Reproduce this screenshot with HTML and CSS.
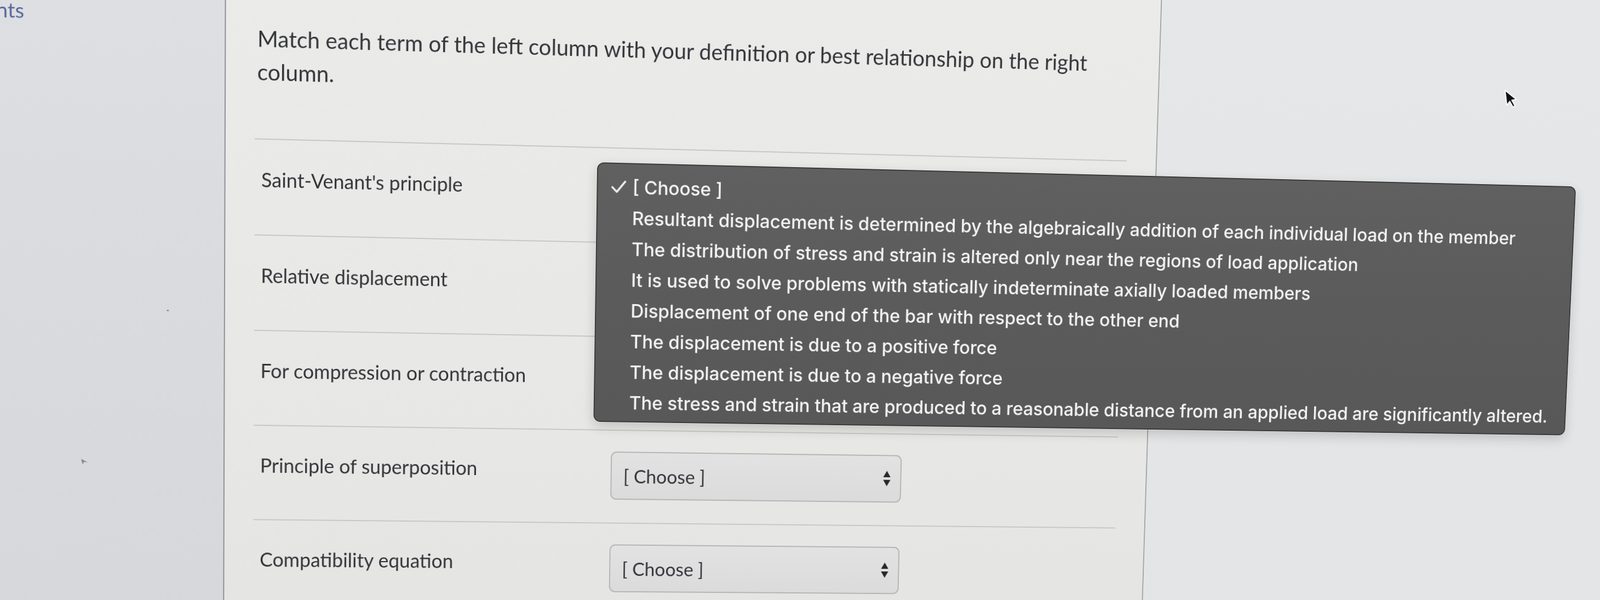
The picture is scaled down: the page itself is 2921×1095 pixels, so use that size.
FILE: index.html
```html
<!DOCTYPE html>
<html lang="en">
<head>
<meta charset="utf-8">
<title>Matching question</title>
<link rel="stylesheet" href="styles.css">
</head>
<body>
<div class="screen">
  <aside class="sidebar">
    <span class="crumb">nts</span>
    <span class="speck-dot"></span>
    <svg class="speck-mark" viewBox="0 0 12 10" width="12" height="10"><path d="M0 0 L12 6 L5 5 L3 10 Z" fill="#80828a"/></svg>
  </aside>
  <main class="panel">
    <p class="question">Match each term of the left column with your definition or best relationship on the right column.</p>
    <div class="answers">
      <div class="row">
        <div class="term">Saint-Venant's principle</div>
        <div class="select is-under"><span>[ Choose ]</span><svg class="arrows" viewBox="0 0 14 30" width="14" height="30"><path d="M7 0 L14 12 L0 12 Z M0 17 L14 17 L7 29 Z" fill="#26272b"/></svg></div>
      </div>
      <div class="row">
        <div class="term">Relative displacement</div>
        <div class="select is-under"><span>[ Choose ]</span><svg class="arrows" viewBox="0 0 14 30" width="14" height="30"><path d="M7 0 L14 12 L0 12 Z M0 17 L14 17 L7 29 Z" fill="#26272b"/></svg></div>
      </div>
      <div class="row">
        <div class="term">For compression or contraction</div>
        <div class="select is-under"><span>[ Choose ]</span><svg class="arrows" viewBox="0 0 14 30" width="14" height="30"><path d="M7 0 L14 12 L0 12 Z M0 17 L14 17 L7 29 Z" fill="#26272b"/></svg></div>
      </div>
      <div class="row">
        <div class="term">Principle of superposition</div>
        <div class="select"><span>[ Choose ]</span><svg class="arrows" viewBox="0 0 14 30" width="14" height="30"><path d="M7 0 L14 12 L0 12 Z M0 17 L14 17 L7 29 Z" fill="#26272b"/></svg></div>
      </div>
      <div class="row">
        <div class="term">Compatibility equation</div>
        <div class="select"><span>[ Choose ]</span><svg class="arrows" viewBox="0 0 14 30" width="14" height="30"><path d="M7 0 L14 12 L0 12 Z M0 17 L14 17 L7 29 Z" fill="#26272b"/></svg></div>
      </div>
    </div>
  </main>
  <div class="backdrop"></div>

  <div class="menu">
    <div class="item"><span class="slot"><svg class="check" viewBox="0 0 28 24" width="28" height="24"><path d="M2 13 L10.5 21.5 L26 2.5" fill="none" stroke="#ededed" stroke-width="3.6" stroke-linecap="round" stroke-linejoin="round"/></svg></span><span>[ Choose ]</span></div>
    <div class="item"><span class="slot"></span><span>Resultant displacement is determined by the algebraically addition of each individual load on the member</span></div>
    <div class="item"><span class="slot"></span><span>The distribution of stress and strain is altered only near the regions of load application</span></div>
    <div class="item"><span class="slot"></span><span>It is used to solve problems with statically indeterminate axially loaded members</span></div>
    <div class="item"><span class="slot"></span><span>Displacement of one end of the bar with respect to the other end</span></div>
    <div class="item"><span class="slot"></span><span>The displacement is due to a positive force</span></div>
    <div class="item"><span class="slot"></span><span>The displacement is due to a negative force</span></div>
    <div class="item"><span class="slot"></span><span>The stress and strain that are produced to a reasonable distance from an applied load are significantly altered.</span></div>
  </div>

  <svg class="cursor" viewBox="0 0 13 21" width="24" height="39"><path d="M1 1 L1 16.5 L4.6 13 L7.3 19.4 L9.6 18.4 L7 12.2 L12 12.2 Z" fill="#111" stroke="#fff" stroke-width="1.1" stroke-linejoin="round"/></svg>
</div>
</body>
</html>
```

FILE: styles.css
```css
html, body {
  margin: 0;
  padding: 0;
  overflow: hidden;
  background: #e4e5e6;
}

.screen {
  position: relative;
  display: flex;
  width: 3150px;
  height: 1340px;
  margin-top: -120px;
  font-family: Lato, "Open Sans", sans-serif;
  transform-origin: 470px 670px;
  transform: matrix3d(1, 0.01868, 0, 0.000022457, -0.00403, 1, 0, 0.00001707, 0, 0, 1, 0, 0, 0, 0, 1);
}

.sidebar {
  position: relative;
  flex: 0 0 auto;
  width: 409px;
  padding-top: 139px;
  border-right: 2px solid #8f9199;
  background: linear-gradient(180deg, #dfe0e4 0%, #dadbdf 45%, #d6d7db 100%);
}

.crumb {
  display: block;
  margin-left: 0;
  font-size: 37px;
  line-height: 33px;
  color: #56679a;
}

.speck-dot {
  position: absolute;
  left: 305px;
  top: 688px;
  width: 4px;
  height: 3px;
  border-radius: 50%;
  background: #8a8c93;
}

.speck-mark {
  position: absolute;
  left: 150px;
  top: 963px;
}

.panel {
  flex: 0 0 auto;
  width: 1642px;
  padding: 164px 57px 0 53px;
  border-right: 2px solid #a3a4a6;
  background: linear-gradient(180deg, #ebebe9 0%, #e8e8e6 55%, #e4e4e2 100%);
}

.question {
  margin: 0 0 90px;
  padding-left: 4px;
  font-size: 40.6px;
  line-height: 60px;
  color: #333539;
}

.row {
  display: flex;
  align-items: flex-start;
  box-sizing: border-box;
  height: 174px;
  padding-top: 39px;
  border-top: 2px solid #c7c7c6;
}

.term {
  flex: 0 0 665px;
  box-sizing: border-box;
  padding: 6px 0 0 12px;
  font-size: 36px;
  line-height: 54px;
  color: #333539;
}

.select {
  display: flex;
  align-items: center;
  justify-content: space-between;
  box-sizing: border-box;
  width: 556px;
  height: 90px;
  padding: 0 19px 0 22px;
  border: 2px solid #b4b4b4;
  border-radius: 11px;
  background: linear-gradient(180deg, #e2e2e2 0%, #dbdbdb 100%);
  font-size: 35px;
  color: #33353a;
}

.select.is-under span {
  visibility: hidden;
}

.arrows {
  display: block;
}

.backdrop {
  flex: 1 1 auto;
  background: linear-gradient(180deg, #e6e7e8 0%, #e3e4e5 100%);
}

.menu {
  position: absolute;
  left: 1095px;
  top: 402px;
  width: 1907px;
  height: 480px;
  box-sizing: border-box;
  padding: 14px 0 5px;
  border: 2px solid #393939;
  border-radius: 13px;
  background: linear-gradient(180deg, #606060 0%, #5b5b5b 50%, #585858 100%);
  box-shadow: 0 0 0 1px rgba(255, 255, 255, 0.3), 0 8px 22px rgba(0, 0, 0, 0.16);
  font-family: Inter, "Liberation Sans", sans-serif;
  font-size: 34.3px;
  font-weight: 500;
  color: #f4f4f4;
}

.item {
  display: flex;
  align-items: flex-start;
  height: 57px;
  line-height: 57px;
  white-space: nowrap;
}

.slot {
  flex: 0 0 65px;
  height: 57px;
}

.check {
  display: block;
  margin: 16px 0 0 25px;
}

.cursor {
  position: absolute;
  left: 2848px;
  top: 221px;
  transform: rotate(-10deg);
  transform-origin: 0 0;
}
```
